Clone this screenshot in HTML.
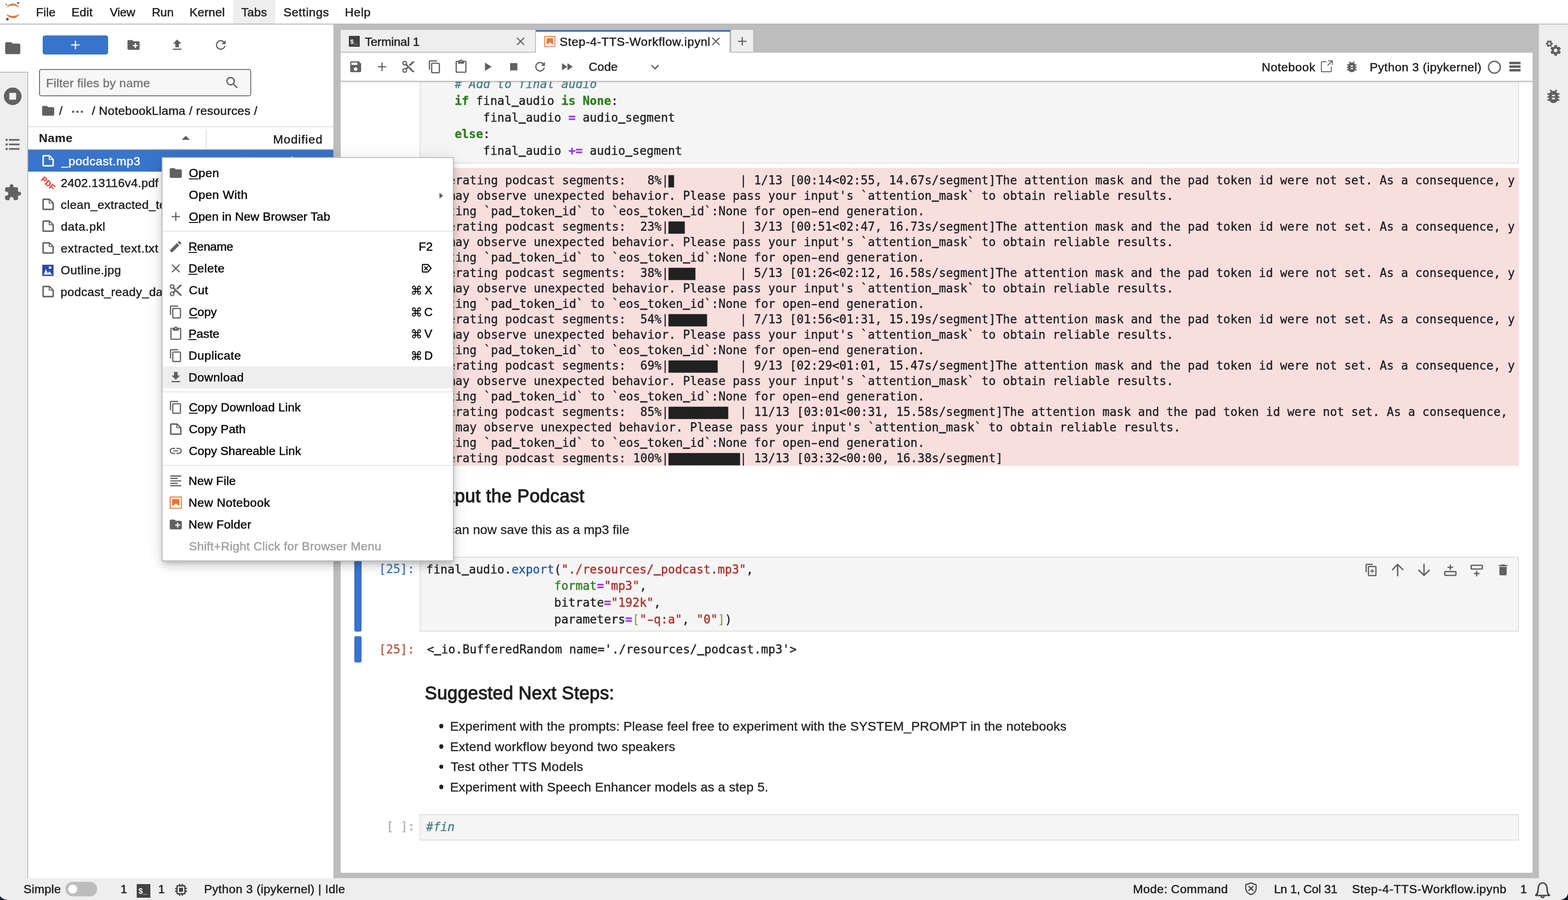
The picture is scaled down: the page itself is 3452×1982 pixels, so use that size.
<!DOCTYPE html>
<html lang="en">
<head>
<meta charset="utf-8">
<title>Step-4-TTS-Workflow.ipynb - JupyterLab</title>
<style>
*{box-sizing:border-box;margin:0;padding:0}
html{overflow:auto;background:#fff}
body{width:3452px;height:1982px;overflow:hidden;background:#fff}
body{position:relative;font-family:"Liberation Sans",Arial,Helvetica,sans-serif;font-size:26px;color:#212121;-webkit-font-smoothing:antialiased}
div,nav,header,footer,section,aside,main,ul,li,span,svg,pre,h2,p,button,input,u,code{position:absolute;display:block}
.t span,.t u{position:static;display:inline}
u{text-decoration:underline;text-underline-offset:3px;text-decoration-thickness:2px}
.t{white-space:pre;font-weight:400;-webkit-text-stroke:0.6px}
.ic{overflow:visible}
#menubar,#lside,#rside,#fb,#dock,#nb,#ctx,#status{will-change:transform}
ul{list-style:none}
#menubar{left:0;top:0;width:3452px;height:54px;background:#fff;border-bottom:2px solid #b9b9b9}
#menubar .hl{background:#eee}
#lside{left:0;top:54px;width:62px;height:1880px;background:#eee;border-right:2px solid #bdbdbd}
#lside .cur{left:0;top:0;width:62px;height:105px;background:#fff}
#lside .rest{left:0;top:104px;width:62px;height:2px;background:#bdbdbd}
#rside{left:3388px;top:54px;width:64px;height:1880px;background:#eee}
#dock{left:734px;top:54px;width:2654px;height:1880px;background:#bdbdbd}
#fb{left:62px;top:54px;width:672px;height:1880px;background:#fff;overflow:hidden}
#fb .newbtn{background:#3874cb;border-radius:5px}
#fb .filter{background:#f7f7f7;border:2px solid #6f6f6f;border-radius:5px}
#fb .sep{background:#e0e0e0}
#fb .hdr{left:0;top:226px;width:672px;height:50px;background:#fff;border-bottom:2px solid #c4c4c4;box-shadow:0 2px 3px rgba(0,0,0,.12)}
#fb .row{left:0;width:672px;height:48px}
#fb .row.sel{background:#3874cb}
#dock .tabbar{left:16px;top:12px;width:2624px;height:50px}
#dock .tab{top:0;height:50px;background:#eee;border:2px solid #bdbdbd;border-top:none;border-left:none}
#dock .tab.cur{background:#fff;border-bottom-color:#fff;border-bottom:none}
#dock .tab.cur::before{content:"";position:absolute;left:0;top:0;right:-2px;height:4px;background:#3874cb}
#nb{left:16px;top:62px;width:2624px;height:1806px;background:#fff;overflow:hidden}
#nb .toolbar{left:0;top:0;width:2624px;height:64px;background:#fff;border-bottom:2px solid #bababa;box-shadow:0 0 5px rgba(0,0,0,.2);z-index:3}
#nb .ed{left:174px;width:2420px;background:#f5f5f5;border:2px solid #dedede}
#nb .err{left:174px;width:2420px;background:#f9dede}
#nb .bar{left:30px;width:16px;background:#3874cb;border-radius:4px}
pre.t{font-family:"DejaVu Sans Mono", "Liberation Mono", monospace}
.t .us{display:inline-block;transform:translateY(-2.1px) scaleY(2);transform-origin:50% 40.45px}.t .hy{display:inline-block;transform:scaleX(1.6)}
.t .bk{display:inline-block;transform:scaleY(.865);transform-origin:0 41.5px}
.k{color:#2f7d1f;font-weight:700}.c{color:#4a7f80;font-style:italic}.o{color:#a033f3;font-weight:700}.s{color:#ad2b26}.p{color:#2456a6}.b{color:#2f7d1f}.br{color:#9a9a77}
#ctx{left:356px;top:346px;width:643px;height:890px;background:#fff;border:2px solid #bdbdbd;box-shadow:0 12px 20px rgba(0,0,0,.12),0 2px 36px rgba(0,0,0,.1),0 6px 10px -2px rgba(0,0,0,.15);z-index:10}
#ctx li{left:0;width:639px;height:48px}
#ctx li.act{background:#eee}
#ctx li.sep{height:18px}
#ctx li.sep::after{content:"";position:absolute;left:0;right:0;top:7px;height:2px;background:#e3e3e3}
#status{left:0;top:1934px;width:3452px;height:48px;background:#eee}
#status .sw{left:144px;top:8px;width:70px;height:32px;border-radius:16px;background:#bdbdbd}
#status .sw::after{content:"";position:absolute;left:6px;top:6px;width:20px;height:20px;border-radius:50%;background:#fff}
.corner{width:26px;height:26px;top:1956px}</style>
</head>
<body>
<header id="menubar"><svg class="ic" style="left:10px;top:2px" width="40" height="48" viewBox="0 0 40 48"><path fill="#e4793b" d="M4 15.4C9 2.5 27.7 2.5 32.7 15.5C26 8.6 10.7 8.6 4 15.4z"/><path fill="#e4793b" d="M4 28.3C9 41.2 27.9 41.2 32.9 28.2C26.2 34.6 10.7 34.6 4 28.3z"/><circle cx="30" cy="4.5" r="2.3" fill="#616161"/><circle cx="4" cy="7.9" r="1.7" fill="#6a6a6a"/><circle cx="6.3" cy="40.3" r="3" fill="#616161"/></svg><div class="hl" style="left:513px;top:0px;width:93px;height:52px;"></div><span class="t" style="left:79.33px;top:1.00px;font-size:26.5px;line-height:53.0px;letter-spacing:0.050px;">File</span><span class="t" style="left:157.43px;top:1.00px;font-size:26.5px;line-height:53.0px;letter-spacing:0.268px;">Edit</span><span class="t" style="left:241.68px;top:1.00px;font-size:26.5px;line-height:53.0px;letter-spacing:-0.336px;">View</span><span class="t" style="left:334.13px;top:1.00px;font-size:26.5px;line-height:53.0px;letter-spacing:-0.159px;">Run</span><span class="t" style="left:417.13px;top:1.00px;font-size:26.5px;line-height:53.0px;letter-spacing:0.249px;">Kernel</span><span class="t" style="left:531.20px;top:1.00px;font-size:26.5px;line-height:53.0px;letter-spacing:0.159px;">Tabs</span><span class="t" style="left:623.90px;top:1.00px;font-size:26.5px;line-height:53.0px;letter-spacing:0.630px;">Settings</span><span class="t" style="left:759.13px;top:1.00px;font-size:26.5px;line-height:53.0px;letter-spacing:0.729px;">Help</span></header><nav id="lside"><div class="cur"></div><div class="rest"></div><svg class="ic" style="left:8px;top:32px" width="40" height="40" viewBox="0 0 24 24" fill="#616161" ><path d="M10 4H4c-1.1 0-1.99.9-1.99 2L2 18c0 1.1.9 2 2 2h16c1.1 0 2-.9 2-2V8c0-1.1-.9-2-2-2h-8l-2-2z"/></svg><svg class="ic" style="left:8px;top:138px" width="40" height="40" viewBox="0 0 512 512" fill="#616161" ><path d="M256 8C119 8 8 119 8 256s111 248 248 248 248-111 248-248S393 8 256 8zm96 328c0 8.8-7.2 16-16 16H176c-8.8 0-16-7.2-16-16V176c0-8.8 7.2-16 16-16h160c8.8 0 16 7.2 16 16v160z"/></svg><svg class="ic" style="left:8px;top:244px" width="40" height="40" viewBox="0 0 24 24" fill="#616161" ><path d="M7 5h14v2H7V5zm0 8v-2h14v2H7zM4 4.5A1.5 1.5 0 0 1 5.5 6 1.5 1.5 0 0 1 4 7.5 1.5 1.5 0 0 1 2.5 6 1.5 1.5 0 0 1 4 4.5zm0 6A1.5 1.5 0 0 1 5.5 12 1.5 1.5 0 0 1 4 13.5 1.5 1.5 0 0 1 2.5 12 1.5 1.5 0 0 1 4 10.5zM7 19v-2h14v2H7zm-3-2.5A1.5 1.5 0 0 1 5.5 18 1.5 1.5 0 0 1 4 19.5 1.5 1.5 0 0 1 2.5 18 1.5 1.5 0 0 1 4 16.5z"/></svg><svg class="ic" style="left:8px;top:349.7px" width="40" height="40" viewBox="0 0 24 24" fill="#616161" ><path d="M20.5 11H19V7c0-1.1-.9-2-2-2h-4V3.5C13 2.12 11.88 1 10.5 1S8 2.12 8 3.5V5H4c-1.1 0-1.99.9-1.99 2v3.8H3.5c1.49 0 2.7 1.21 2.7 2.7s-1.21 2.7-2.7 2.7H2V20c0 1.1.9 2 2 2h3.8v-1.5c0-1.49 1.21-2.7 2.7-2.7 1.49 0 2.7 1.21 2.7 2.7V22H17c1.1 0 2-.9 2-2v-4h1.5c1.38 0 2.5-1.12 2.5-2.5S21.88 11 20.5 11z"/></svg></nav><aside id="rside"><svg class="ic" style="left:12px;top:32px" width="40" height="40" viewBox="0 0 24 24" fill="#616161" ><path d="M14.9 17.45C16.25 17.45 17.35 16.35 17.35 15C17.35 13.65 16.25 12.55 14.9 12.55C13.54 12.55 12.45 13.65 12.45 15C12.45 16.35 13.54 17.45 14.9 17.45ZM20.1 15.68L21.58 16.84C21.71 16.95 21.75 17.13 21.66 17.29L20.26 19.71C20.17 19.86 20 19.92 19.83 19.86L18.09 19.16C17.73 19.44 17.33 19.67 16.91 19.85L16.64 21.7C16.62 21.87 16.47 22 16.3 22H13.5C13.32 22 13.18 21.87 13.15 21.7L12.89 19.85C12.46 19.67 12.07 19.44 11.71 19.16L9.96 19.86C9.81 19.92 9.62 19.86 9.54 19.71L8.14 17.29C8.05 17.13 8.09 16.95 8.22 16.84L9.7 15.68L9.65 15L9.7 14.31L8.22 13.16C8.09 13.05 8.05 12.86 8.14 12.71L9.54 10.29C9.62 10.13 9.81 10.07 9.96 10.13L11.71 10.84C12.07 10.56 12.46 10.32 12.89 10.15L13.15 8.29C13.18 8.13 13.32 8 13.5 8H16.3C16.47 8 16.62 8.13 16.64 8.29L16.91 10.15C17.33 10.32 17.73 10.56 18.09 10.84L19.83 10.13C20 10.07 20.17 10.13 20.26 10.29L21.66 12.71C21.75 12.86 21.71 13.05 21.58 13.16L20.1 14.31L20.15 15L20.1 15.68Z"/><path d="M7.33 7.44C8.08 7.01 8.34 6.05 7.9 5.3C7.47 4.55 6.51 4.28 5.75 4.72C5.39 4.93 5.13 5.27 5.02 5.68C4.91 6.08 4.97 6.51 5.18 6.87C5.61 7.63 6.58 7.88 7.33 7.44ZM9.66 4.8L10.87 4.95C10.96 4.98 11.04 5.07 11.04 5.19L11.04 6.99C11.05 7.1 10.96 7.2 10.86 7.21L9.66 7.38L9.24 8.13L9.67 9.26C9.71 9.36 9.67 9.48 9.57 9.53L8.02 10.43C7.91 10.49 7.79 10.47 7.72 10.38L6.99 9.43L6.11 9.43L5.38 10.39C5.31 10.47 5.19 10.5 5.08 10.44L3.52 9.54C3.42 9.48 3.38 9.37 3.42 9.26L3.85 8.14L3.43 7.39L2.24 7.22C2.13 7.2 2.04 7.11 2.05 7L2.05 5.2C2.05 5.08 2.13 4.98 2.22 4.96L3.43 4.8L3.86 4.05L3.43 2.93C3.39 2.82 3.43 2.71 3.53 2.65L5.09 1.75C5.2 1.69 5.31 1.71 5.39 1.8L6.12 2.75L7 2.75L7.73 1.79C7.8 1.71 7.92 1.67 8.02 1.73L9.58 2.63C9.69 2.69 9.72 2.81 9.69 2.91L9.26 4.04L9.66 4.8Z"/></svg><svg class="ic" style="left:12px;top:138px" width="40" height="40" viewBox="0 0 24 24" fill="#616161" ><path d="M20 8h-2.81c-.45-.78-1.07-1.45-1.82-1.96L17 4.41 15.59 3l-2.17 2.17C12.96 5.06 12.49 5 12 5c-.49 0-.96.06-1.41.17L8.41 3 7 4.41l1.62 1.63C7.88 6.55 7.26 7.22 6.81 8H4v2h2.09c-.05.33-.09.66-.09 1v1H4v2h2v1c0 .34.04.67.09 1H4v2h2.81c1.04 1.79 2.97 3 5.19 3s4.15-1.21 5.19-3H20v-2h-2.09c.05-.33.09-.66.09-1v-1h2v-2h-2v-1c0-.34-.04-.67-.09-1H20V8zm-6 8h-4v-2h4v2zm0-4h-4v-2h4v2z"/></svg></aside><section id="fb"><div class="newbtn" style="left:32px;top:24px;width:144px;height:42px;"><svg class="ic" style="left:56px;top:5px" width="32" height="32" viewBox="0 0 24 24" fill="#fff" ><path d="M19 13h-6v6h-2v-6H5v-2h6V5h2v6h6v2z"/></svg></div><svg class="ic" style="left:216px;top:29px" width="32" height="32" viewBox="0 0 24 24" fill="#616161" ><path d="M20 6h-8l-2-2H4c-1.11 0-1.99.89-1.99 2L2 18c0 1.11.89 2 2 2h16c1.11 0 2-.89 2-2V8c0-1.11-.89-2-2-2zm-1 8h-3v3h-2v-3h-3v-2h3V9h2v3h3v2z"/></svg><svg class="ic" style="left:312px;top:29px" width="32" height="32" viewBox="0 0 24 24" fill="#616161" ><path d="M9 16h6v-6h4l-7-7-7 7h4zm-4 2h14v2H5z"/></svg><svg class="ic" style="left:408.3px;top:29px" width="32" height="32" viewBox="0 0 18 18" fill="#616161" ><path d="M9 13.5c-2.49 0-4.5-2.01-4.5-4.5S6.51 4.5 9 4.5c1.24 0 2.36.52 3.17 1.33L10 8h5V3l-1.76 1.76C12.15 3.68 10.66 3 9 3 5.69 3 3.01 5.69 3.01 9S5.69 15 9 15c2.97 0 5.43-2.16 5.9-5h-1.52c-.46 2-2.24 3.5-4.38 3.5z"/></svg><div class="filter" style="left:24px;top:97.5px;width:467px;height:60.5px;"></div><span class="t" style="left:39.43px;top:102.70px;font-size:26.5px;line-height:53.0px;letter-spacing:0.335px;color:#767676;">Filter files by name</span><svg class="ic" style="left:432.5px;top:111.5px" width="32" height="32" viewBox="0 0 18 18" fill="#616161"><path d="M12.1 10.9h-.7l-.2-.2c.8-.9 1.3-2.2 1.3-3.5 0-3-2.4-5.4-5.4-5.4S1.800 4.200 1.800 7.100s2.400 5.400 5.400 5.400c1.300 0 2.500-.5 3.500-1.300l.2.200v.7l4.100 4.100 1.200-1.200-4.100-4.100zm-5 0c-2.100 0-3.700-1.700-3.700-3.700s1.700-3.700 3.700-3.700 3.700 1.700 3.700 3.700-1.600 3.700-3.700 3.700z"/></svg><svg class="ic" style="left:28px;top:174px" width="32" height="32" viewBox="0 0 24 24" fill="#616161" ><path d="M10 4H4c-1.1 0-1.99.9-1.99 2L2 18c0 1.1.9 2 2 2h16c1.1 0 2-.9 2-2V8c0-1.1-.9-2-2-2h-8l-2-2z"/></svg><span class="t" style="left:68.30px;top:163.50px;font-size:26.5px;line-height:53.0px;">/</span><svg class="ic" style="left:95.5px;top:188px" width="26" height="8" viewBox="0 0 26 8" fill="#616161"><circle cx="3" cy="4" r="2.6"/><circle cx="12.6" cy="4" r="2.6"/><circle cx="22.2" cy="4" r="2.6"/></svg><span class="t" style="left:140.30px;top:163.50px;font-size:26.5px;line-height:53.0px;letter-spacing:0.389px;">/ NotebookLlama / resources /</span><div class="sep" style="left:0px;top:224px;width:672px;height:2px;"></div><div class="hdr"><span class="t" style="left:23.58px;top:-2.50px;font-size:26.5px;line-height:53.0px;letter-spacing:0.601px;font-weight:700;-webkit-text-stroke:0.1px;">Name</span><svg class="ic" style="left:338px;top:19px" width="18" height="9" viewBox="0 0 18 9" fill="#616161"><path d="M0 9L9 0l9 9z"/></svg><div style="left:391px;top:4px;width:2px;height:42px;background:#e0e0e0"></div><span class="t" style="left:539.23px;top:0.50px;font-size:26.5px;line-height:53.0px;letter-spacing:1.188px;">Modified</span></div><div class="row sel" style="top:276px"><svg class="ic" style="left:27.7px;top:7.8px" width="32" height="32" viewBox="0 0 22 22" fill="#fff" ><path d="M19.3 8.2l-5.5-5.5c-.3-.3-.7-.5-1.2-.5H3.9c-.8.1-1.6.9-1.6 1.8v14.1c0 .9.7 1.6 1.6 1.6h14.2c.9 0 1.6-.7 1.6-1.6V9.4c.1-.5-.1-.9-.4-1.2zm-5.8-3.3l3.4 3.6h-3.4V4.9zm3.9 12.7H4.7c-.1 0-.2 0-.2-.2V4.7c0-.2.1-.3.2-.3h7.2v4.4s0 .8.3.8h5.3v7.8s-.1 0-.1.2z"/></svg><span class="t" style="left:73.40px;top:-1.20px;font-size:26.5px;line-height:53.0px;letter-spacing:0.636px;color:#fff;">_podcast.mp3</span><span class="t" style="left:477.15px;top:-1.20px;font-size:26.5px;line-height:53.0px;letter-spacing:-0.143px;color:#fff;">8 seconds ago</span></div><div class="row" style="top:324px"><svg class="ic" style="left:24px;top:3.8px" width="38" height="38" viewBox="0 0 38 38"><text transform="translate(3.2 14.2) rotate(43)" font-family="Liberation Sans,Arial,sans-serif" font-weight="700" font-size="17" letter-spacing="0.4" fill="#e5443a" stroke="#e5443a" stroke-width="0.5">PDF</text></svg><span class="t" style="left:71.67px;top:-1.20px;font-size:26.5px;line-height:53.0px;letter-spacing:0.318px;">2402.13116v4.pdf</span><span class="t" style="left:477.29px;top:-1.20px;font-size:26.5px;line-height:53.0px;letter-spacing:0.904px;">3 months ago</span></div><div class="row" style="top:372px"><svg class="ic" style="left:27.7px;top:7.8px" width="32" height="32" viewBox="0 0 22 22" fill="#616161" ><path d="M19.3 8.2l-5.5-5.5c-.3-.3-.7-.5-1.2-.5H3.9c-.8.1-1.6.9-1.6 1.8v14.1c0 .9.7 1.6 1.6 1.6h14.2c.9 0 1.6-.7 1.6-1.6V9.4c.1-.5-.1-.9-.4-1.2zm-5.8-3.3l3.4 3.6h-3.4V4.9zm3.9 12.7H4.7c-.1 0-.2 0-.2-.2V4.7c0-.2.1-.3.2-.3h7.2v4.4s0 .8.3.8h5.3v7.8s-.1 0-.1.2z"/></svg><span class="t" style="left:71.87px;top:-1.20px;font-size:26.5px;line-height:53.0px;letter-spacing:0.450px;">clean_extracted_text.txt</span><span class="t" style="left:476.97px;top:-1.20px;font-size:26.5px;line-height:53.0px;letter-spacing:3.088px;">2 hours ago</span></div><div class="row" style="top:420px"><svg class="ic" style="left:27.7px;top:7.8px" width="32" height="32" viewBox="0 0 22 22" fill="#616161" ><path d="M19.3 8.2l-5.5-5.5c-.3-.3-.7-.5-1.2-.5H3.9c-.8.1-1.6.9-1.6 1.8v14.1c0 .9.7 1.6 1.6 1.6h14.2c.9 0 1.6-.7 1.6-1.6V9.4c.1-.5-.1-.9-.4-1.2zm-5.8-3.3l3.4 3.6h-3.4V4.9zm3.9 12.7H4.7c-.1 0-.2 0-.2-.2V4.7c0-.2.1-.3.2-.3h7.2v4.4s0 .8.3.8h5.3v7.8s-.1 0-.1.2z"/></svg><span class="t" style="left:71.89px;top:-1.20px;font-size:26.5px;line-height:53.0px;letter-spacing:0.724px;">data.pkl</span><span class="t" style="left:476.97px;top:-1.20px;font-size:26.5px;line-height:53.0px;letter-spacing:3.088px;">2 hours ago</span></div><div class="row" style="top:468px"><svg class="ic" style="left:27.7px;top:7.8px" width="32" height="32" viewBox="0 0 22 22" fill="#616161" ><path d="M19.3 8.2l-5.5-5.5c-.3-.3-.7-.5-1.2-.5H3.9c-.8.1-1.6.9-1.6 1.8v14.1c0 .9.7 1.6 1.6 1.6h14.2c.9 0 1.6-.7 1.6-1.6V9.4c.1-.5-.1-.9-.4-1.2zm-5.8-3.3l3.4 3.6h-3.4V4.9zm3.9 12.7H4.7c-.1 0-.2 0-.2-.2V4.7c0-.2.1-.3.2-.3h7.2v4.4s0 .8.3.8h5.3v7.8s-.1 0-.1.2z"/></svg><span class="t" style="left:71.87px;top:-1.20px;font-size:26.5px;line-height:53.0px;letter-spacing:0.755px;">extracted_text.txt</span><span class="t" style="left:476.97px;top:-1.20px;font-size:26.5px;line-height:53.0px;letter-spacing:3.088px;">2 hours ago</span></div><div class="row" style="top:516px"><svg class="ic" style="left:28px;top:9.5px" width="31" height="31" viewBox="0 0 22 22"><path fill="#e8f0fb" d="M2.2 2.2h17.5v17.5H2.2z"/><path fill="#2a4aa8" d="M2.2 2.2v17.5h17.5l.1-17.5H2.2zm12.1 2.2c1.2 0 2.2 1 2.2 2.2s-1 2.2-2.2 2.2-2.2-1-2.2-2.2 1-2.2 2.2-2.2zM4.4 17.6l3.3-8.8 3.3 6.6 2.2-3.2 4.4 5.4H4.4z"/></svg><span class="t" style="left:71.74px;top:-1.20px;font-size:26.5px;line-height:53.0px;letter-spacing:0.617px;">Outline.jpg</span><span class="t" style="left:477.29px;top:-1.20px;font-size:26.5px;line-height:53.0px;letter-spacing:0.904px;">3 months ago</span></div><div class="row" style="top:564px"><svg class="ic" style="left:27.7px;top:7.8px" width="32" height="32" viewBox="0 0 22 22" fill="#616161" ><path d="M19.3 8.2l-5.5-5.5c-.3-.3-.7-.5-1.2-.5H3.9c-.8.1-1.6.9-1.6 1.8v14.1c0 .9.7 1.6 1.6 1.6h14.2c.9 0 1.6-.7 1.6-1.6V9.4c.1-.5-.1-.9-.4-1.2zm-5.8-3.3l3.4 3.6h-3.4V4.9zm3.9 12.7H4.7c-.1 0-.2 0-.2-.2V4.7c0-.2.1-.3.2-.3h7.2v4.4s0 .8.3.8h5.3v7.8s-.1 0-.1.2z"/></svg><span class="t" style="left:71.29px;top:-1.20px;font-size:26.5px;line-height:53.0px;letter-spacing:0.450px;">podcast_ready_data.pkl</span><span class="t" style="left:476.28px;top:-1.20px;font-size:26.5px;line-height:53.0px;letter-spacing:4.979px;">1 hour ago</span></div></section><main id="dock"><div class="tabbar"><div class="tab" style="left:0;width:430px"><svg class="ic" style="left:18px;top:13px" width="24" height="24" viewBox="0 0 24 24"><rect width="24" height="24" fill="#424242"/><text x="3.2" y="16.6" font-family="Liberation Sans,Arial,sans-serif" font-weight="700" font-size="13.5" fill="#fff">$_</text></svg><span class="t" style="left:53.20px;top:-0.40px;font-size:26.5px;line-height:53.0px;letter-spacing:-0.183px;">Terminal 1</span><svg class="ic" style="left:381.20000000000005px;top:10px" width="30" height="30" viewBox="0 0 24 24" fill="#616161" ><path d="M19 6.41L17.59 5 12 10.59 6.41 5 5 6.41 10.59 12 5 17.59 6.41 19 12 13.41 17.59 19 19 17.59 13.41 12z"/></svg></div><div class="tab cur" style="left:430px;width:428px"><svg class="ic" style="left:15.5px;top:10.8px" width="29" height="29" viewBox="0 0 22 22" fill="#e4793b"><path d="M18.7 3.3v15.4H3.3V3.3h15.4m1.5-1.5H1.8v18.3h18.3l.1-18.3z"/><path d="M16.5 16.5l-5.4-4.3-5.6 4.3v-11h11z"/></svg><div style="left:0;top:0;width:381.5px;height:48px;overflow:hidden"><span class="t" style="left:52.10px;top:-0.20px;font-size:26.5px;line-height:53.0px;letter-spacing:0.717px;">Step-4-TTS-Workflow.ipynb</span></div><svg class="ic" style="left:381.29999999999995px;top:10px" width="30" height="30" viewBox="0 0 24 24" fill="#616161" ><path d="M19 6.41L17.59 5 12 10.59 6.41 5 5 6.41 10.59 12 5 17.59 6.41 19 12 13.41 17.59 19 19 17.59 13.41 12z"/></svg></div><div class="tab" style="left:858px;width:49.5px;border-left:2px solid #bdbdbd;border-right:none"><svg class="ic" style="left:8.200000000000045px;top:8.5px" width="32" height="32" viewBox="0 0 24 24" fill="#616161" ><path d="M19 13h-6v6h-2v-6H5v-2h6V5h2v6h6v2z"/></svg></div></div><section id="nb"><div class="toolbar"><svg class="ic" style="left:17.0px;top:15.0px" width="32" height="32" viewBox="0 0 24 24" fill="#616161" ><path d="M17 3H5c-1.11 0-2 .9-2 2v14c0 1.1.89 2 2 2h14c1.1 0 2-.9 2-2V7l-4-4zm-5 16c-1.66 0-3-1.34-3-3s1.34-3 3-3 3 1.34 3 3-1.34 3-3 3zm3-10H5V5h10v4z"/></svg><svg class="ic" style="left:75.0px;top:15.0px" width="32" height="32" viewBox="0 0 24 24" fill="#616161" ><path d="M19 13h-6v6h-2v-6H5v-2h6V5h2v6h6v2z"/></svg><svg class="ic" style="left:133.0px;top:15.0px" width="32" height="32" viewBox="0 0 24 24" fill="#616161" ><path d="M9.64 7.64c.23-.5.36-1.05.36-1.64 0-2.21-1.79-4-4-4S2 3.79 2 6s1.79 4 4 4c.59 0 1.14-.13 1.64-.36L10 12l-2.36 2.36C7.14 14.13 6.59 14 6 14c-2.21 0-4 1.79-4 4s1.79 4 4 4 4-1.79 4-4c0-.59-.13-1.14-.36-1.64L12 14l7 7h3v-1L9.64 7.64zM6 8c-1.1 0-2-.89-2-2s.9-2 2-2 2 .89 2 2-.9 2-2 2zm0 12c-1.1 0-2-.89-2-2s.9-2 2-2 2 .89 2 2-.9 2-2 2zm6-7.5c-.28 0-.5-.22-.5-.5s.22-.5.5-.5.5.22.5.5-.22.5-.5.5zM19 3l-6 6 2 2 7-7V3z"/></svg><svg class="ic" style="left:190.5px;top:15.0px" width="32" height="32" viewBox="0 0 18 18" fill="#616161" ><path d="M11.9 1H3.2c-.8 0-1.5.7-1.5 1.5v10.2h1.5V2.5h8.7V1zM14 3.9H6c-.8 0-1.5.7-1.5 1.5v10.2c0 .8.7 1.5 1.5 1.5h8c.8 0 1.5-.7 1.5-1.5V5.4c0-.8-.7-1.5-1.5-1.5zm0 11.7H6V5.4h8v10.2z"/></svg><svg class="ic" style="left:249.0px;top:15.0px" width="32" height="32" viewBox="0 0 24 24" fill="#616161" ><path d="M19 2h-4.18C14.4.84 13.3 0 12 0c-1.3 0-2.4.84-2.82 2H5c-1.1 0-2 .9-2 2v16c0 1.1.9 2 2 2h14c1.1 0 2-.9 2-2V4c0-1.1-.9-2-2-2zm-7 0c.55 0 1 .45 1 1s-.45 1-1 1-1-.45-1-1 .45-1 1-1zm7 18H5V4h2v3h10V4h2v16z"/></svg><svg class="ic" style="left:307.0px;top:15.0px" width="32" height="32" viewBox="0 0 24 24" fill="#616161" ><path d="M8 5v14l11-7z"/></svg><svg class="ic" style="left:365.0px;top:15.0px" width="32" height="32" viewBox="0 0 24 24" fill="#616161" ><path d="M6 6h12v12H6z"/></svg><svg class="ic" style="left:423.0px;top:15.0px" width="32" height="32" viewBox="0 0 18 18" fill="#616161" ><path d="M9 13.5c-2.49 0-4.5-2.01-4.5-4.5S6.51 4.5 9 4.5c1.24 0 2.36.52 3.17 1.33L10 8h5V3l-1.76 1.76C12.15 3.68 10.66 3 9 3 5.69 3 3.01 5.69 3.01 9S5.69 15 9 15c2.97 0 5.43-2.16 5.9-5h-1.52c-.46 2-2.24 3.5-4.38 3.5z"/></svg><svg class="ic" style="left:481.5999999999999px;top:15.0px" width="32" height="32" viewBox="0 0 24 24" fill="#616161" ><path d="M4 18l8.5-6L4 6v12zm9-12v12l8.5-6L13 6z"/></svg><span class="t" style="left:545.95px;top:4.50px;font-size:26.5px;line-height:53.0px;letter-spacing:0.191px;">Code</span><svg class="ic" style="left:676.2px;top:15.5px" width="32" height="32" viewBox="0 0 18 18" fill="#616161" ><path d="M5.2 5.9L9 9.7l3.8-3.8 1.2 1.2-4.9 5-4.9-5z"/></svg><span class="t" style="left:2027.63px;top:5.70px;font-size:26.5px;line-height:53.0px;letter-spacing:0.628px;">Notebook</span><svg class="ic" style="left:2153.6px;top:14.599999999999994px" width="32" height="32" viewBox="0 0 32 32" fill="#616161" ><path d="M26 28H6a2.003 2.003 0 0 1-2-2V6a2.003 2.003 0 0 1 2-2h10v2H6v20h20V16h2v10a2.003 2.003 0 0 1-2 2Z"/><path d="M20 2v2h6.586L18 12.586 19.414 14 28 5.414V12h2V2H20z"/></svg><svg class="ic" style="left:2210px;top:15px" width="32" height="32" viewBox="0 0 24 24" fill="#616161" ><path d="M20 8h-2.81c-.45-.78-1.07-1.45-1.82-1.96L17 4.41 15.59 3l-2.17 2.17C12.96 5.06 12.49 5 12 5c-.49 0-.96.06-1.41.17L8.41 3 7 4.41l1.62 1.63C7.88 6.55 7.26 7.22 6.81 8H4v2h2.09c-.05.33-.09.66-.09 1v1H4v2h2v1c0 .34.04.67.09 1H4v2h2.81c1.04 1.79 2.97 3 5.19 3s4.15-1.21 5.19-3H20v-2h-2.09c.05-.33.09-.66.09-1v-1h2v-2h-2v-1c0-.34-.04-.67-.09-1H20V8zm-6 8h-4v-2h4v2zm0-4h-4v-2h4v2z"/></svg><span class="t" style="left:2265.53px;top:5.70px;font-size:26.5px;line-height:53.0px;letter-spacing:0.534px;">Python 3 (ipykernel)</span><svg class="ic" style="left:2524px;top:15.8px" width="32" height="32" viewBox="0 0 32 32" fill="none" stroke="#616161" stroke-width="3"><circle cx="16" cy="16" r="13"/></svg><svg class="ic" style="left:2573px;top:20.4px" width="25" height="22" viewBox="0 0 25 22" fill="#616161"><rect x="0" y="0" width="24.5" height="5.4"/><rect x="0" y="8" width="24.5" height="5.4"/><rect x="0" y="16" width="24.5" height="5.4"/></svg></div><div class="ed" style="left:174px;top:-56px;width:2420px;height:300px;"></div><pre class="t" style="left:188.30px;top:43.30px;font-size:26px;line-height:52px;-webkit-text-stroke:0.45px;font-family:"DejaVu Sans Mono", "Liberation Mono", monospace;">    <span class="c"># Add to final audio</span></pre><pre class="t" style="left:188.30px;top:79.90px;font-size:26px;line-height:52px;-webkit-text-stroke:0.45px;font-family:"DejaVu Sans Mono", "Liberation Mono", monospace;">    <span class="k">if</span> final<span class="us">_</span>audio <span class="k">is</span> <span class="k">None</span>:</pre><pre class="t" style="left:188.30px;top:116.50px;font-size:26px;line-height:52px;-webkit-text-stroke:0.45px;font-family:"DejaVu Sans Mono", "Liberation Mono", monospace;">        final<span class="us">_</span>audio <span class="o">=</span> audio<span class="us">_</span>segment</pre><pre class="t" style="left:188.30px;top:153.10px;font-size:26px;line-height:52px;-webkit-text-stroke:0.45px;font-family:"DejaVu Sans Mono", "Liberation Mono", monospace;">    <span class="k">else</span>:</pre><pre class="t" style="left:188.30px;top:189.70px;font-size:26px;line-height:52px;-webkit-text-stroke:0.45px;font-family:"DejaVu Sans Mono", "Liberation Mono", monospace;">        final<span class="us">_</span>audio <span class="o">+=</span> audio<span class="us">_</span>segment</pre><div class="err" style="left:174px;top:254px;width:2420px;height:655.8px;"></div><pre class="t" style="left:189.90px;top:255.40px;font-size:26px;line-height:52px;-webkit-text-stroke:0.45px;font-family:"DejaVu Sans Mono", "Liberation Mono", monospace;">Generating podcast segments:   8%|<span class="bk">▊</span>         | 1/13 [00:14&lt;02:55, 14.67s/segment]The attention mask and the pad token id were not set. As a consequence, y</pre><pre class="t" style="left:189.90px;top:289.40px;font-size:26px;line-height:52px;-webkit-text-stroke:0.45px;font-family:"DejaVu Sans Mono", "Liberation Mono", monospace;">ou may observe unexpected behavior. Please pass your input&#x27;s `attention<span class="us">_</span>mask` to obtain reliable results.</pre><pre class="t" style="left:189.90px;top:323.40px;font-size:26px;line-height:52px;-webkit-text-stroke:0.45px;font-family:"DejaVu Sans Mono", "Liberation Mono", monospace;">Setting `pad<span class="us">_</span>token<span class="us">_</span>id` to `eos<span class="us">_</span>token<span class="us">_</span>id`:None for open<span class="hy">-</span>end generation.</pre><pre class="t" style="left:189.90px;top:357.40px;font-size:26px;line-height:52px;-webkit-text-stroke:0.45px;font-family:"DejaVu Sans Mono", "Liberation Mono", monospace;">Generating podcast segments:  23%|<span class="bk">██▎</span>       | 3/13 [00:51&lt;02:47, 16.73s/segment]The attention mask and the pad token id were not set. As a consequence, y</pre><pre class="t" style="left:189.90px;top:391.40px;font-size:26px;line-height:52px;-webkit-text-stroke:0.45px;font-family:"DejaVu Sans Mono", "Liberation Mono", monospace;">ou may observe unexpected behavior. Please pass your input&#x27;s `attention<span class="us">_</span>mask` to obtain reliable results.</pre><pre class="t" style="left:189.90px;top:425.40px;font-size:26px;line-height:52px;-webkit-text-stroke:0.45px;font-family:"DejaVu Sans Mono", "Liberation Mono", monospace;">Setting `pad<span class="us">_</span>token<span class="us">_</span>id` to `eos<span class="us">_</span>token<span class="us">_</span>id`:None for open<span class="hy">-</span>end generation.</pre><pre class="t" style="left:189.90px;top:459.40px;font-size:26px;line-height:52px;-webkit-text-stroke:0.45px;font-family:"DejaVu Sans Mono", "Liberation Mono", monospace;">Generating podcast segments:  38%|<span class="bk">███▊</span>      | 5/13 [01:26&lt;02:12, 16.58s/segment]The attention mask and the pad token id were not set. As a consequence, y</pre><pre class="t" style="left:189.90px;top:493.40px;font-size:26px;line-height:52px;-webkit-text-stroke:0.45px;font-family:"DejaVu Sans Mono", "Liberation Mono", monospace;">ou may observe unexpected behavior. Please pass your input&#x27;s `attention<span class="us">_</span>mask` to obtain reliable results.</pre><pre class="t" style="left:189.90px;top:527.40px;font-size:26px;line-height:52px;-webkit-text-stroke:0.45px;font-family:"DejaVu Sans Mono", "Liberation Mono", monospace;">Setting `pad<span class="us">_</span>token<span class="us">_</span>id` to `eos<span class="us">_</span>token<span class="us">_</span>id`:None for open<span class="hy">-</span>end generation.</pre><pre class="t" style="left:189.90px;top:561.40px;font-size:26px;line-height:52px;-webkit-text-stroke:0.45px;font-family:"DejaVu Sans Mono", "Liberation Mono", monospace;">Generating podcast segments:  54%|<span class="bk">█████▍</span>    | 7/13 [01:56&lt;01:31, 15.19s/segment]The attention mask and the pad token id were not set. As a consequence, y</pre><pre class="t" style="left:189.90px;top:595.40px;font-size:26px;line-height:52px;-webkit-text-stroke:0.45px;font-family:"DejaVu Sans Mono", "Liberation Mono", monospace;">ou may observe unexpected behavior. Please pass your input&#x27;s `attention<span class="us">_</span>mask` to obtain reliable results.</pre><pre class="t" style="left:189.90px;top:629.40px;font-size:26px;line-height:52px;-webkit-text-stroke:0.45px;font-family:"DejaVu Sans Mono", "Liberation Mono", monospace;">Setting `pad<span class="us">_</span>token<span class="us">_</span>id` to `eos<span class="us">_</span>token<span class="us">_</span>id`:None for open<span class="hy">-</span>end generation.</pre><pre class="t" style="left:189.90px;top:663.40px;font-size:26px;line-height:52px;-webkit-text-stroke:0.45px;font-family:"DejaVu Sans Mono", "Liberation Mono", monospace;">Generating podcast segments:  69%|<span class="bk">██████▉</span>   | 9/13 [02:29&lt;01:01, 15.47s/segment]The attention mask and the pad token id were not set. As a consequence, y</pre><pre class="t" style="left:189.90px;top:697.40px;font-size:26px;line-height:52px;-webkit-text-stroke:0.45px;font-family:"DejaVu Sans Mono", "Liberation Mono", monospace;">ou may observe unexpected behavior. Please pass your input&#x27;s `attention<span class="us">_</span>mask` to obtain reliable results.</pre><pre class="t" style="left:189.90px;top:731.40px;font-size:26px;line-height:52px;-webkit-text-stroke:0.45px;font-family:"DejaVu Sans Mono", "Liberation Mono", monospace;">Setting `pad<span class="us">_</span>token<span class="us">_</span>id` to `eos<span class="us">_</span>token<span class="us">_</span>id`:None for open<span class="hy">-</span>end generation.</pre><pre class="t" style="left:189.90px;top:765.40px;font-size:26px;line-height:52px;-webkit-text-stroke:0.45px;font-family:"DejaVu Sans Mono", "Liberation Mono", monospace;">Generating podcast segments:  85%|<span class="bk">████████▍</span> | 11/13 [03:01&lt;00:31, 15.58s/segment]The attention mask and the pad token id were not set. As a consequence,</pre><pre class="t" style="left:189.90px;top:799.40px;font-size:26px;line-height:52px;-webkit-text-stroke:0.45px;font-family:"DejaVu Sans Mono", "Liberation Mono", monospace;">you may observe unexpected behavior. Please pass your input&#x27;s `attention<span class="us">_</span>mask` to obtain reliable results.</pre><pre class="t" style="left:189.90px;top:833.40px;font-size:26px;line-height:52px;-webkit-text-stroke:0.45px;font-family:"DejaVu Sans Mono", "Liberation Mono", monospace;">Setting `pad<span class="us">_</span>token<span class="us">_</span>id` to `eos<span class="us">_</span>token<span class="us">_</span>id`:None for open<span class="hy">-</span>end generation.</pre><pre class="t" style="left:189.90px;top:867.40px;font-size:26px;line-height:52px;-webkit-text-stroke:0.45px;font-family:"DejaVu Sans Mono", "Liberation Mono", monospace;">Generating podcast segments: 100%|<span class="bk">██████████</span>| 13/13 [03:32&lt;00:00, 16.38s/segment]</pre><h2 class="t" style="left:185.26px;top:936.40px;font-size:40px;line-height:80px;letter-spacing:0.503px;-webkit-text-stroke:1.3px;">Output the Podcast</h2><p class="t" style="left:186.57px;top:1022.00px;font-size:28.5px;line-height:57.0px;letter-spacing:0.085px;-webkit-text-stroke:0.4px;">We can now save this as a mp3 file</p><div class="bar" style="left:30px;top:1110px;width:16px;height:165px;"></div><pre class="t" style="left:84.35px;top:1111.10px;font-size:26px;line-height:52px;-webkit-text-stroke:0.45px;color:#3f7ebd;font-family:"DejaVu Sans Mono", "Liberation Mono", monospace;">[25]:</pre><div class="ed" style="left:174px;top:1110px;width:2420px;height:165px;"></div><pre class="t" style="left:188.30px;top:1111.80px;font-size:26px;line-height:52px;-webkit-text-stroke:0.45px;font-family:"DejaVu Sans Mono", "Liberation Mono", monospace;">final<span class="us">_</span>audio.<span class="p">export</span>(<span class="s">"./resources/<span class="us">_</span>podcast.mp3"</span>,</pre><pre class="t" style="left:188.30px;top:1148.40px;font-size:26px;line-height:52px;-webkit-text-stroke:0.45px;font-family:"DejaVu Sans Mono", "Liberation Mono", monospace;">                  <span class="b">format</span><span class="o">=</span><span class="s">"mp3"</span>,</pre><pre class="t" style="left:188.30px;top:1185.00px;font-size:26px;line-height:52px;-webkit-text-stroke:0.45px;font-family:"DejaVu Sans Mono", "Liberation Mono", monospace;">                  bitrate<span class="o">=</span><span class="s">"192k"</span>,</pre><pre class="t" style="left:188.30px;top:1221.60px;font-size:26px;line-height:52px;-webkit-text-stroke:0.45px;font-family:"DejaVu Sans Mono", "Liberation Mono", monospace;">                  parameters<span class="o">=</span><span class="br">[</span><span class="s">"<span class="hy">-</span>q:a"</span>, <span class="s">"0"</span><span class="br">]</span>)</pre><svg class="ic" style="left:2252.7px;top:1123px" width="32" height="32" viewBox="0 0 24 24" fill="none" stroke="#616161" stroke-width="1.9" stroke-linecap="round" stroke-linejoin="round"><g transform="translate(12 11.4) scale(1.07) translate(-12 -12)"><path d="M4 15.5V5.2C4 4.5 4.5 4 5.2 4h8.3"/><rect x="7.6" y="7.4" width="11.5" height="14" rx="0.8"/><path d="M11 14.4h4.8M13.4 12v4.8" stroke-width="1.5"/></g></svg><svg class="ic" style="left:2311px;top:1123px" width="32" height="32" viewBox="0 0 24 24" fill="none" stroke="#616161" stroke-width="1.9" stroke-linecap="round" stroke-linejoin="round"><path d="M12 21.6V3.2M3.4 11.6L12 3l8.6 8.6" stroke-width="2.3"/></svg><svg class="ic" style="left:2369px;top:1123px" width="32" height="32" viewBox="0 0 24 24" fill="none" stroke="#616161" stroke-width="1.9" stroke-linecap="round" stroke-linejoin="round"><path d="M12 2.6v18.2M3.4 12.6L12 21.2l8.6-8.6" stroke-width="2.3"/></svg><svg class="ic" style="left:2426.7px;top:1123px" width="32" height="32" viewBox="0 0 24 24" fill="none" stroke="#616161" stroke-width="1.9" stroke-linecap="round" stroke-linejoin="round"><rect x="2.8" y="14.8" width="18.4" height="6.3" rx="1.2" stroke-width="2.2"/><path d="M12 4v7.6M8.2 7.8h7.6" stroke-width="2.1"/></svg><svg class="ic" style="left:2485.3px;top:1123px" width="32" height="32" viewBox="0 0 24 24" fill="none" stroke="#616161" stroke-width="1.9" stroke-linecap="round" stroke-linejoin="round"><rect x="2.8" y="4.4" width="18.4" height="6.2" rx="1.2" stroke-width="2.2"/><path d="M12 14.2v7.6M8.2 18h7.6" stroke-width="2.1"/></svg><svg class="ic" style="left:2543px;top:1123px" width="32" height="32" viewBox="0 0 24 24" fill="#616161" ><path d="M6 19c0 1.1.9 2 2 2h8c1.1 0 2-.9 2-2V7H6v12zM19 4h-3.5l-1-1h-5l-1 1H5v2h14V4z"/></svg><div class="bar" style="left:30px;top:1285px;width:16px;height:58px;"></div><pre class="t" style="left:84.35px;top:1288.00px;font-size:26px;line-height:52px;-webkit-text-stroke:0.45px;color:#b55d42;font-family:"DejaVu Sans Mono", "Liberation Mono", monospace;">[25]:</pre><pre class="t" style="left:189.90px;top:1288.00px;font-size:26px;line-height:52px;-webkit-text-stroke:0.45px;font-family:"DejaVu Sans Mono", "Liberation Mono", monospace;">&lt;<span class="us">_</span>io.BufferedRandom name=&#x27;./resources/<span class="us">_</span>podcast.mp3&#x27;&gt;</pre><h2 class="t" style="left:185.33px;top:1369.60px;font-size:40px;line-height:80px;letter-spacing:0.386px;-webkit-text-stroke:1.3px;">Suggested Next Steps:</h2><ul><li><span style="left:216.89999999999998px;top:1478px;width:9.5px;height:9.5px;border-radius:50%;background:#212121"></span><span class="t" style="left:240.66px;top:1454.50px;font-size:28.5px;line-height:57.0px;letter-spacing:0.165px;-webkit-text-stroke:0.4px;">Experiment with the prompts: Please feel free to experiment with the SYSTEM_PROMPT in the notebooks</span></li><li><span style="left:216.89999999999998px;top:1523.2px;width:9.5px;height:9.5px;border-radius:50%;background:#212121"></span><span class="t" style="left:240.66px;top:1499.70px;font-size:28.5px;line-height:57.0px;letter-spacing:0.327px;-webkit-text-stroke:0.4px;">Extend workflow beyond two speakers</span></li><li><span style="left:216.89999999999998px;top:1567.7px;width:9.5px;height:9.5px;border-radius:50%;background:#212121"></span><span class="t" style="left:242.36px;top:1544.20px;font-size:28.5px;line-height:57.0px;letter-spacing:0.259px;-webkit-text-stroke:0.4px;">Test other TTS Models</span></li><li><span style="left:216.89999999999998px;top:1612.3px;width:9.5px;height:9.5px;border-radius:50%;background:#212121"></span><span class="t" style="left:240.66px;top:1588.80px;font-size:28.5px;line-height:57.0px;letter-spacing:0.169px;-webkit-text-stroke:0.4px;">Experiment with Speech Enhancer models as a step 5.</span></li></ul><pre class="t" style="left:100.75px;top:1677.90px;font-size:26px;line-height:52px;-webkit-text-stroke:0.45px;color:#adadad;font-family:"DejaVu Sans Mono", "Liberation Mono", monospace;">[ ]:</pre><div class="ed" style="left:174px;top:1677px;width:2420px;height:58px;"></div><pre class="t" style="left:188.30px;top:1679.00px;font-size:26px;line-height:52px;-webkit-text-stroke:0.45px;font-family:"DejaVu Sans Mono", "Liberation Mono", monospace;"><span class="c">#fin</span></pre></section></main><ul id="ctx"><li style="top:9px"><svg class="ic" style="left:13.0px;top:8.0px" width="32" height="32" viewBox="0 0 24 24" fill="#616161" ><path d="M10 4H4c-1.1 0-1.99.9-1.99 2L2 18c0 1.1.9 2 2 2h16c1.1 0 2-.9 2-2V8c0-1.1-.9-2-2-2h-8l-2-2z"/></svg><span class="t" style="left:57.84px;top:-2.30px;font-size:26.5px;line-height:53.0px;letter-spacing:0.516px;color:#0a0a0a;"><u>O</u>pen</span></li><li style="top:57px"><span class="t" style="left:57.84px;top:-2.30px;font-size:26.5px;line-height:53.0px;letter-spacing:0.486px;color:#0a0a0a;">Open With</span><svg class="ic" style="left:609px;top:18.5px" width="10" height="14" viewBox="0 0 10 14" fill="#616161"><path d="M0.5 0.5L8.5 7L0.5 13.5z"/></svg></li><li style="top:105px"><svg class="ic" style="left:13.0px;top:8.0px" width="32" height="32" viewBox="0 0 24 24" fill="#616161" ><path d="M19 13h-6v6h-2v-6H5v-2h6V5h2v6h6v2z"/></svg><span class="t" style="left:57.84px;top:-2.30px;font-size:26.5px;line-height:53.0px;letter-spacing:0.170px;color:#0a0a0a;"><u>O</u>pen in New Browser Tab</span></li><li class="sep" style="top:153px"></li><li style="top:171px"><svg class="ic" style="left:13.0px;top:8.0px" width="32" height="32" viewBox="0 0 24 24" fill="#616161" ><path d="M3 17.25V21h3.75L17.81 9.94l-3.75-3.75L3 17.25zM20.71 7.04c.39-.39.39-1.02 0-1.41l-2.34-2.34c-.39-.39-1.02-.39-1.41 0l-1.83 1.83 3.75 3.75 1.83-1.83z"/></svg><span class="t" style="left:56.93px;top:-2.30px;font-size:26.5px;line-height:53.0px;letter-spacing:-0.323px;color:#0a0a0a;"><u>R</u>ename</span><span class="t" style="left:563.63px;top:-2.30px;font-size:26.5px;line-height:53.0px;letter-spacing:0.081px;color:#0a0a0a;">F2</span></li><li style="top:219px"><svg class="ic" style="left:13.0px;top:8.0px" width="32" height="32" viewBox="0 0 24 24" fill="#616161" ><path d="M19 6.41L17.59 5 12 10.59 6.41 5 5 6.41 10.59 12 5 17.59 6.41 19 12 13.41 17.59 19 19 17.59 13.41 12z"/></svg><span class="t" style="left:56.93px;top:-2.30px;font-size:26.5px;line-height:53.0px;letter-spacing:0.530px;color:#0a0a0a;"><u>D</u>elete</span><svg class="ic" style="left:569.6px;top:13px" width="24" height="22" viewBox="0 0 24 22" fill="none" stroke="#0a0a0a" stroke-width="2.5" stroke-linejoin="round" stroke-linecap="round"><path d="M3 2.6h11l7 8.2-7 8.2H3q-1 0-1-1V3.6q0-1 1-1z"/><path d="M6.6 7.4l6.8 6.8M13.4 7.4l-6.8 6.8" stroke-width="2.2"/></svg></li><li style="top:267px"><svg class="ic" style="left:13.0px;top:8.0px" width="32" height="32" viewBox="0 0 24 24" fill="#616161" ><path d="M9.64 7.64c.23-.5.36-1.05.36-1.64 0-2.21-1.79-4-4-4S2 3.79 2 6s1.79 4 4 4c.59 0 1.14-.13 1.64-.36L10 12l-2.36 2.36C7.14 14.13 6.59 14 6 14c-2.21 0-4 1.79-4 4s1.79 4 4 4 4-1.79 4-4c0-.59-.13-1.14-.36-1.64L12 14l7 7h3v-1L9.64 7.64zM6 8c-1.1 0-2-.89-2-2s.9-2 2-2 2 .89 2 2-.9 2-2 2zm0 12c-1.1 0-2-.89-2-2s.9-2 2-2 2 .89 2 2-.9 2-2 2zm6-7.5c-.28 0-.5-.22-.5-.5s.22-.5.5-.5.5.22.5.5-.22.5-.5.5zM19 3l-6 6 2 2 7-7V3z"/></svg><span class="t" style="left:57.75px;top:-2.30px;font-size:26.5px;line-height:53.0px;letter-spacing:0.551px;color:#0a0a0a;">Cut</span><span class="t" style="left:545.60px;top:-0.50px;font-size:25.5px;line-height:51.0px;-webkit-text-stroke:0.3px;color:#0a0a0a;">⌘</span><span class="t" style="left:576.80px;top:-1.80px;font-size:26px;line-height:52px;color:#0a0a0a;">X</span></li><li style="top:315px"><svg class="ic" style="left:13.0px;top:8.0px" width="32" height="32" viewBox="0 0 18 18" fill="#616161" ><path d="M11.9 1H3.2c-.8 0-1.5.7-1.5 1.5v10.2h1.5V2.5h8.7V1zM14 3.9H6c-.8 0-1.5.7-1.5 1.5v10.2c0 .8.7 1.5 1.5 1.5h8c.8 0 1.5-.7 1.5-1.5V5.4c0-.8-.7-1.5-1.5-1.5zm0 11.7H6V5.4h8v10.2z"/></svg><span class="t" style="left:57.75px;top:-2.30px;font-size:26.5px;line-height:53.0px;letter-spacing:-0.122px;color:#0a0a0a;"><u>C</u>opy</span><span class="t" style="left:545.60px;top:-0.50px;font-size:25.5px;line-height:51.0px;-webkit-text-stroke:0.3px;color:#0a0a0a;">⌘</span><span class="t" style="left:575.81px;top:-1.80px;font-size:26px;line-height:52px;color:#0a0a0a;">C</span></li><li style="top:363px"><svg class="ic" style="left:13.0px;top:8.0px" width="32" height="32" viewBox="0 0 24 24" fill="#616161" ><path d="M19 2h-4.18C14.4.84 13.3 0 12 0c-1.3 0-2.4.84-2.82 2H5c-1.1 0-2 .9-2 2v16c0 1.1.9 2 2 2h14c1.1 0 2-.9 2-2V4c0-1.1-.9-2-2-2zm-7 0c.55 0 1 .45 1 1s-.45 1-1 1-1-.45-1-1 .45-1 1-1zm7 18H5V4h2v3h10V4h2v16z"/></svg><span class="t" style="left:56.93px;top:-2.30px;font-size:26.5px;line-height:53.0px;letter-spacing:0.097px;color:#0a0a0a;"><u>P</u>aste</span><span class="t" style="left:545.60px;top:-0.50px;font-size:25.5px;line-height:51.0px;-webkit-text-stroke:0.3px;color:#0a0a0a;">⌘</span><span class="t" style="left:576.37px;top:-1.80px;font-size:26px;line-height:52px;color:#0a0a0a;">V</span></li><li style="top:411px"><svg class="ic" style="left:13.0px;top:8.0px" width="32" height="32" viewBox="0 0 18 18" fill="#616161" ><path d="M11.9 1H3.2c-.8 0-1.5.7-1.5 1.5v10.2h1.5V2.5h8.7V1zM14 3.9H6c-.8 0-1.5.7-1.5 1.5v10.2c0 .8.7 1.5 1.5 1.5h8c.8 0 1.5-.7 1.5-1.5V5.4c0-.8-.7-1.5-1.5-1.5zm0 11.7H6V5.4h8v10.2z"/></svg><span class="t" style="left:56.93px;top:-2.30px;font-size:26.5px;line-height:53.0px;letter-spacing:0.647px;color:#0a0a0a;">Duplicate</span><span class="t" style="left:545.60px;top:-0.50px;font-size:25.5px;line-height:51.0px;-webkit-text-stroke:0.3px;color:#0a0a0a;">⌘</span><span class="t" style="left:576.07px;top:-1.80px;font-size:26px;line-height:52px;color:#0a0a0a;">D</span></li><li class="act" style="top:459px"><svg class="ic" style="left:13.0px;top:8.0px" width="32" height="32" viewBox="0 0 24 24" fill="#616161" ><path d="M19 9h-4V3H9v6H5l7 7 7-7zM5 18v2h14v-2H5z"/></svg><span class="t" style="left:56.93px;top:-2.30px;font-size:26.5px;line-height:53.0px;letter-spacing:0.518px;color:#0a0a0a;">Download</span></li><li class="sep" style="top:507px"></li><li style="top:525px"><svg class="ic" style="left:13.0px;top:8.0px" width="32" height="32" viewBox="0 0 18 18" fill="#616161" ><path d="M11.9 1H3.2c-.8 0-1.5.7-1.5 1.5v10.2h1.5V2.5h8.7V1zM14 3.9H6c-.8 0-1.5.7-1.5 1.5v10.2c0 .8.7 1.5 1.5 1.5h8c.8 0 1.5-.7 1.5-1.5V5.4c0-.8-.7-1.5-1.5-1.5zm0 11.7H6V5.4h8v10.2z"/></svg><span class="t" style="left:57.75px;top:-2.30px;font-size:26.5px;line-height:53.0px;letter-spacing:0.180px;color:#0a0a0a;"><u>C</u>opy Download Link</span></li><li style="top:573px"><svg class="ic" style="left:13.0px;top:8.0px" width="32" height="32" viewBox="0 0 22 22" fill="#616161" ><path d="M19.3 8.2l-5.5-5.5c-.3-.3-.7-.5-1.2-.5H3.9c-.8.1-1.6.9-1.6 1.8v14.1c0 .9.7 1.6 1.6 1.6h14.2c.9 0 1.6-.7 1.6-1.6V9.4c.1-.5-.1-.9-.4-1.2zm-5.8-3.3l3.4 3.6h-3.4V4.9zm3.9 12.7H4.7c-.1 0-.2 0-.2-.2V4.7c0-.2.1-.3.2-.3h7.2v4.4s0 .8.3.8h5.3v7.8s-.1 0-.1.2z"/></svg><span class="t" style="left:57.75px;top:-2.30px;font-size:26.5px;line-height:53.0px;letter-spacing:0.166px;color:#0a0a0a;">Copy Path</span></li><li style="top:621px"><svg class="ic" style="left:13.0px;top:8.0px" width="32" height="32" viewBox="0 0 24 24" fill="#616161" ><path d="M3.9 12c0-1.71 1.39-3.1 3.1-3.1h4V7H7c-2.76 0-5 2.24-5 5s2.24 5 5 5h4v-1.9H7c-1.71 0-3.1-1.39-3.1-3.1zM8 13h8v-2H8v2zm9-6h-4v1.9h4c1.71 0 3.1 1.39 3.1 3.1s-1.39 3.1-3.1 3.1h-4V17h4c2.76 0 5-2.24 5-5s-2.24-5-5-5z"/></svg><span class="t" style="left:57.75px;top:-2.30px;font-size:26.5px;line-height:53.0px;letter-spacing:0.055px;color:#0a0a0a;">Copy Shareable Link</span></li><li class="sep" style="top:669px"></li><li style="top:687px"><svg class="ic" style="left:13.0px;top:8.0px" width="32" height="32" viewBox="0 0 24 24" fill="#616161" ><path d="M15 15H3v2h12v-2zm0-8H3v2h12V7zM3 13h18v-2H3v2zm0 8h18v-2H3v2zM3 3v2h18V3H3z"/></svg><span class="t" style="left:56.93px;top:-2.30px;font-size:26.5px;line-height:53.0px;letter-spacing:0.139px;color:#0a0a0a;">New File</span></li><li style="top:735px"><svg class="ic" style="left:13.1px;top:7.6px" width="32" height="32" viewBox="0 0 22 22" fill="#e4793b"><path d="M18.7 3.3v15.4H3.3V3.3h15.4m1.5-1.5H1.8v18.3h18.3l.1-18.3z"/><path d="M16.5 16.5l-5.4-4.3-5.6 4.3v-11h11z"/></svg><span class="t" style="left:56.93px;top:-2.30px;font-size:26.5px;line-height:53.0px;letter-spacing:0.502px;color:#0a0a0a;">New Notebook</span></li><li style="top:783px"><svg class="ic" style="left:13.0px;top:8.0px" width="32" height="32" viewBox="0 0 24 24" fill="#616161" ><path d="M20 6h-8l-2-2H4c-1.11 0-1.99.89-1.99 2L2 18c0 1.11.89 2 2 2h16c1.11 0 2-.89 2-2V8c0-1.11-.89-2-2-2zm-1 8h-3v3h-2v-3h-3v-2h3V9h2v3h3v2z"/></svg><span class="t" style="left:56.93px;top:-2.30px;font-size:26.5px;line-height:53.0px;letter-spacing:0.292px;color:#0a0a0a;">New Folder</span></li><li style="top:831px"><span class="t" style="left:57.90px;top:-2.30px;font-size:26.5px;line-height:53.0px;letter-spacing:0.359px;color:#a0a0a0;">Shift+Right Click for Browser Menu</span></li></ul><footer id="status"><span class="t" style="left:51.80px;top:-2.00px;font-size:26.5px;line-height:53.0px;letter-spacing:0.216px;">Simple</span><div class="sw"></div><span class="t" style="left:265.28px;top:-2.00px;font-size:26.5px;line-height:53.0px;">1</span><svg class="ic" style="left:300.6px;top:13px" width="30" height="30" viewBox="0 0 24 24"><rect width="24" height="24" fill="#424242"/><text x="3.2" y="16.6" font-family="Liberation Sans,Arial,sans-serif" font-weight="700" font-size="13.5" fill="#fff">$_</text></svg><span class="t" style="left:348.28px;top:-2.00px;font-size:26.5px;line-height:53.0px;">1</span><svg class="ic" style="left:380.5px;top:8.0px" width="35" height="35" viewBox="0 0 24 24" fill="#424242" ><path d="M9 9h6v6H9z"/><path d="M21 11V9h-2V7c0-1.1-.9-2-2-2h-2V3h-2v2h-2V3H9v2H7c-1.1 0-2 .9-2 2v2H3v2h2v2H3v2h2v2c0 1.1.9 2 2 2h2v2h2v-2h2v2h2v-2h2c1.1 0 2-.9 2-2v-2h2v-2h-2v-2h2zm-4 6H7V7h10v10z"/></svg><span class="t" style="left:449.13px;top:-2.00px;font-size:26.5px;line-height:53.0px;letter-spacing:0.402px;">Python 3 (ipykernel) | Idle</span><span class="t" style="left:2494.33px;top:-2.00px;font-size:26.5px;line-height:53.0px;letter-spacing:0.452px;">Mode: Command</span><svg class="ic" style="left:2738px;top:7px" width="32" height="32" viewBox="0 0 32 32" fill="none" stroke="#424242" stroke-width="2.4" stroke-linejoin="round" stroke-linecap="round"><path d="M16 3.5L4.5 7.5v8c0 6.5 4.5 11 11.5 13.5 7-2.5 11.5-7 11.5-13.5v-8z"/><path d="M11.5 11l9 9M20.5 11l-9 9" stroke-width="2.6"/></svg><span class="t" style="left:2804.63px;top:-2.00px;font-size:26.5px;line-height:53.0px;letter-spacing:-0.285px;">Ln 1, Col 31</span><span class="t" style="left:2976.50px;top:-2.00px;font-size:26.5px;line-height:53.0px;letter-spacing:0.680px;">Step-4-TTS-Workflow.ipynb</span><span class="t" style="left:3346.98px;top:-2.00px;font-size:26.5px;line-height:53.0px;">1</span><svg class="ic" style="left:3377.9px;top:7.6px" width="36.3" height="36.3" viewBox="0 0 16 16" fill="#424242" ><path d="M8 0.29c-1.4 0-2.7.73-3.6 1.8-1.2 1.5-1.4 3.4-1.5 5.2-.18 2.2-.44 4-2.3 5.3l.28 1.3h5c.026.66.32 1.1.71 1.5.84.61 2 .61 2.8 0 .52-.4.6-1 .71-1.5h5l.28-1.3c-1.9-.97-2.2-3.3-2.3-5.3-.13-1.8-.26-3.7-1.5-5.2-.85-1-2.2-1.8-3.6-1.8zm0 1.4c.88 0 1.9.55 2.5 1.3.88 1.1 1.1 2.7 1.2 4.4.13 1.7.23 3.6 1.3 5.2h-10c1.1-1.6 1.2-3.4 1.3-5.2.13-1.7.3-3.3 1.2-4.4.59-.72 1.6-1.3 2.5-1.3zm-.74 12h1.5c-.0015.28.015.79-.74.79-.73.0016-.72-.53-.74-.79z"/></svg></footer><svg class="ic" style="left:0;top:1962px" width="20" height="20" viewBox="0 0 20 20"><path d="M0 11Q3.5 18 18 20H0z" fill="#14203a"/></svg><svg class="ic" style="left:3432px;top:1962px" width="20" height="20" viewBox="0 0 20 20"><path d="M20 5Q18 17 3 20H20z" fill="#0d1728"/></svg></body>
</html>
